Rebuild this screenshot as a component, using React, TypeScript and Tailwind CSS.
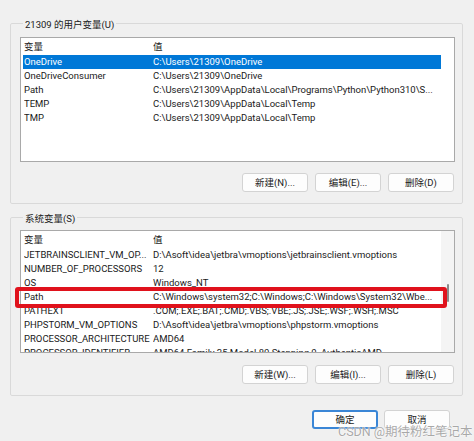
import React from "react";

const FONT = { fontFamily: 'Roboto, "Noto Sans CJK SC", sans-serif' };

type Row = [string, string];

const userRows: Row[] = [
  ["OneDrive", "C:\\Users\\21309\\OneDrive"],
  ["OneDriveConsumer", "C:\\Users\\21309\\OneDrive"],
  ["Path", "C:\\Users\\21309\\AppData\\Local\\Programs\\Python\\Python310\\S..."],
  ["TEMP", "C:\\Users\\21309\\AppData\\Local\\Temp"],
  ["TMP", "C:\\Users\\21309\\AppData\\Local\\Temp"],
];

const sysRows: Row[] = [
  ["JETBRAINSCLIENT_VM_OP...", "D:\\Asoft\\idea\\jetbra\\vmoptions\\jetbrainsclient.vmoptions"],
  ["NUMBER_OF_PROCESSORS", "12"],
  ["OS", "Windows_NT"],
  ["Path", "C:\\Windows\\system32;C:\\Windows;C:\\Windows\\System32\\Wbe..."],
  ["PATHEXT", ".COM;.EXE;.BAT;.CMD;.VBS;.VBE;.JS;.JSE;.WSF;.WSH;.MSC"],
  ["PHPSTORM_VM_OPTIONS", "D:\\Asoft\\idea\\jetbra\\vmoptions\\phpstorm.vmoptions"],
  ["PROCESSOR_ARCHITECTURE", "AMD64"],
  ["PROCESSOR_IDENTIFIER", "AMD64 Family 25 Model 80 Stepping 0, AuthenticAMD"],
];

function ListBox({ rows, height, selected, scrollbar }: { rows: Row[]; height: number; selected?: number; scrollbar?: boolean }) {
  return (
    <div
      className="w-[435px] border border-[#a9a9a9] bg-white flex overflow-hidden"
      style={{ height }}
    >
      <div className="flex-1 flex flex-col pl-[2px]">
        <div className="h-[17px] shrink-0 flex items-center pl-[1px] text-[#1a1a1a]">
          <div className="w-[129px]">变量</div>
          <div>值</div>
        </div>
        {rows.map((r, i) => (
          <div
            key={i}
            className={
              "h-[14px] shrink-0 flex items-center pl-[1px] whitespace-nowrap " +
              (i === selected ? "bg-[#0078d7] text-white" : "text-[#1a1a1a]")
            }
          >
            <div className="w-[129px] overflow-hidden">{r[0]}</div>
            <div className="flex-1 overflow-hidden">{r[1]}</div>
          </div>
        ))}
      </div>
      <div className={"w-[13px] shrink-0 flex flex-col items-center " + (scrollbar ? "bg-[#f4f4f4]" : "bg-white")}>
        {scrollbar && <div className="mt-[53px] ml-[1px] w-[2px] h-[18px] bg-[#8a8a8a] rounded-full" />}
      </div>
    </div>
  );
}

function Btn({ label, w = 66, focused }: { label: string; w?: number; focused?: boolean }) {
  return (
    <div
      className={
        "h-[19px] flex items-center justify-center rounded-[3px] bg-[#fdfdfd] text-[#1a1a1a] " +
        (focused ? "border-2 border-[#3a86d6]" : "border border-[#d3d3d3]")
      }
      style={{ width: w }}
    >
      {label}
    </div>
  );
}

export default function App() {
  return (
    <div className="relative w-[474px] h-[441px] bg-[#f0f0f0] overflow-hidden text-[9.5px] leading-[12px]" style={FONT}>
      <div className="pl-[10px] flex flex-col">
        <fieldset className="mt-[17px] w-[453px] h-[187px] border border-[#d9d9d9] rounded-[2px] pt-[8px] pl-[9px]">
          <legend className="ml-[3px] px-[2px] text-[#1a1a1a] leading-[12px] translate-y-[2px]">21309 的用户变量(U)</legend>
          <ListBox rows={userRows} height={125} selected={0} />
          <div className="w-[435px] mt-[11px] flex justify-end gap-[7px] pr-[1px]">
            <Btn label="新建(N)..." />
            <Btn label="编辑(E)..." />
            <Btn label="删除(D)" />
          </div>
        </fieldset>
        <fieldset className="mt-[7px] w-[453px] h-[185px] border border-[#d9d9d9] rounded-[2px] pt-[7px] pl-[9px]">
          <legend className="ml-[3px] px-[2px] text-[#1a1a1a] leading-[12px] translate-y-[2px]">系统变量(S)</legend>
          <ListBox rows={sysRows} height={123} scrollbar />
          <div className="w-[435px] mt-[12px] flex justify-end gap-[7px] pr-[1px]">
            <Btn label="新建(W)..." />
            <Btn label="编辑(I)..." />
            <Btn label="删除(L)" />
          </div>
        </fieldset>
        <div className="w-[440px] mt-[14px] flex justify-end gap-[6px]">
          <Btn label="确定" focused />
          <Btn label="取消" />
        </div>
      </div>

      {/* red annotation box */}
      <div className="absolute left-[15px] top-[287px] w-[432px] h-[21px] border-[4px] border-[#e0121c] rounded-[3px]" />

      {/* watermark */}
      <div
        className="absolute left-[338px] top-[424px] text-[12.5px] leading-[16px] text-[#8c8c8c]/75 whitespace-nowrap"
        style={{ textShadow: "0 0 1px #fff, 0 0 2px #fff" }}
      >
        CSDN @期待粉红笔记本
      </div>
    </div>
  );
}
